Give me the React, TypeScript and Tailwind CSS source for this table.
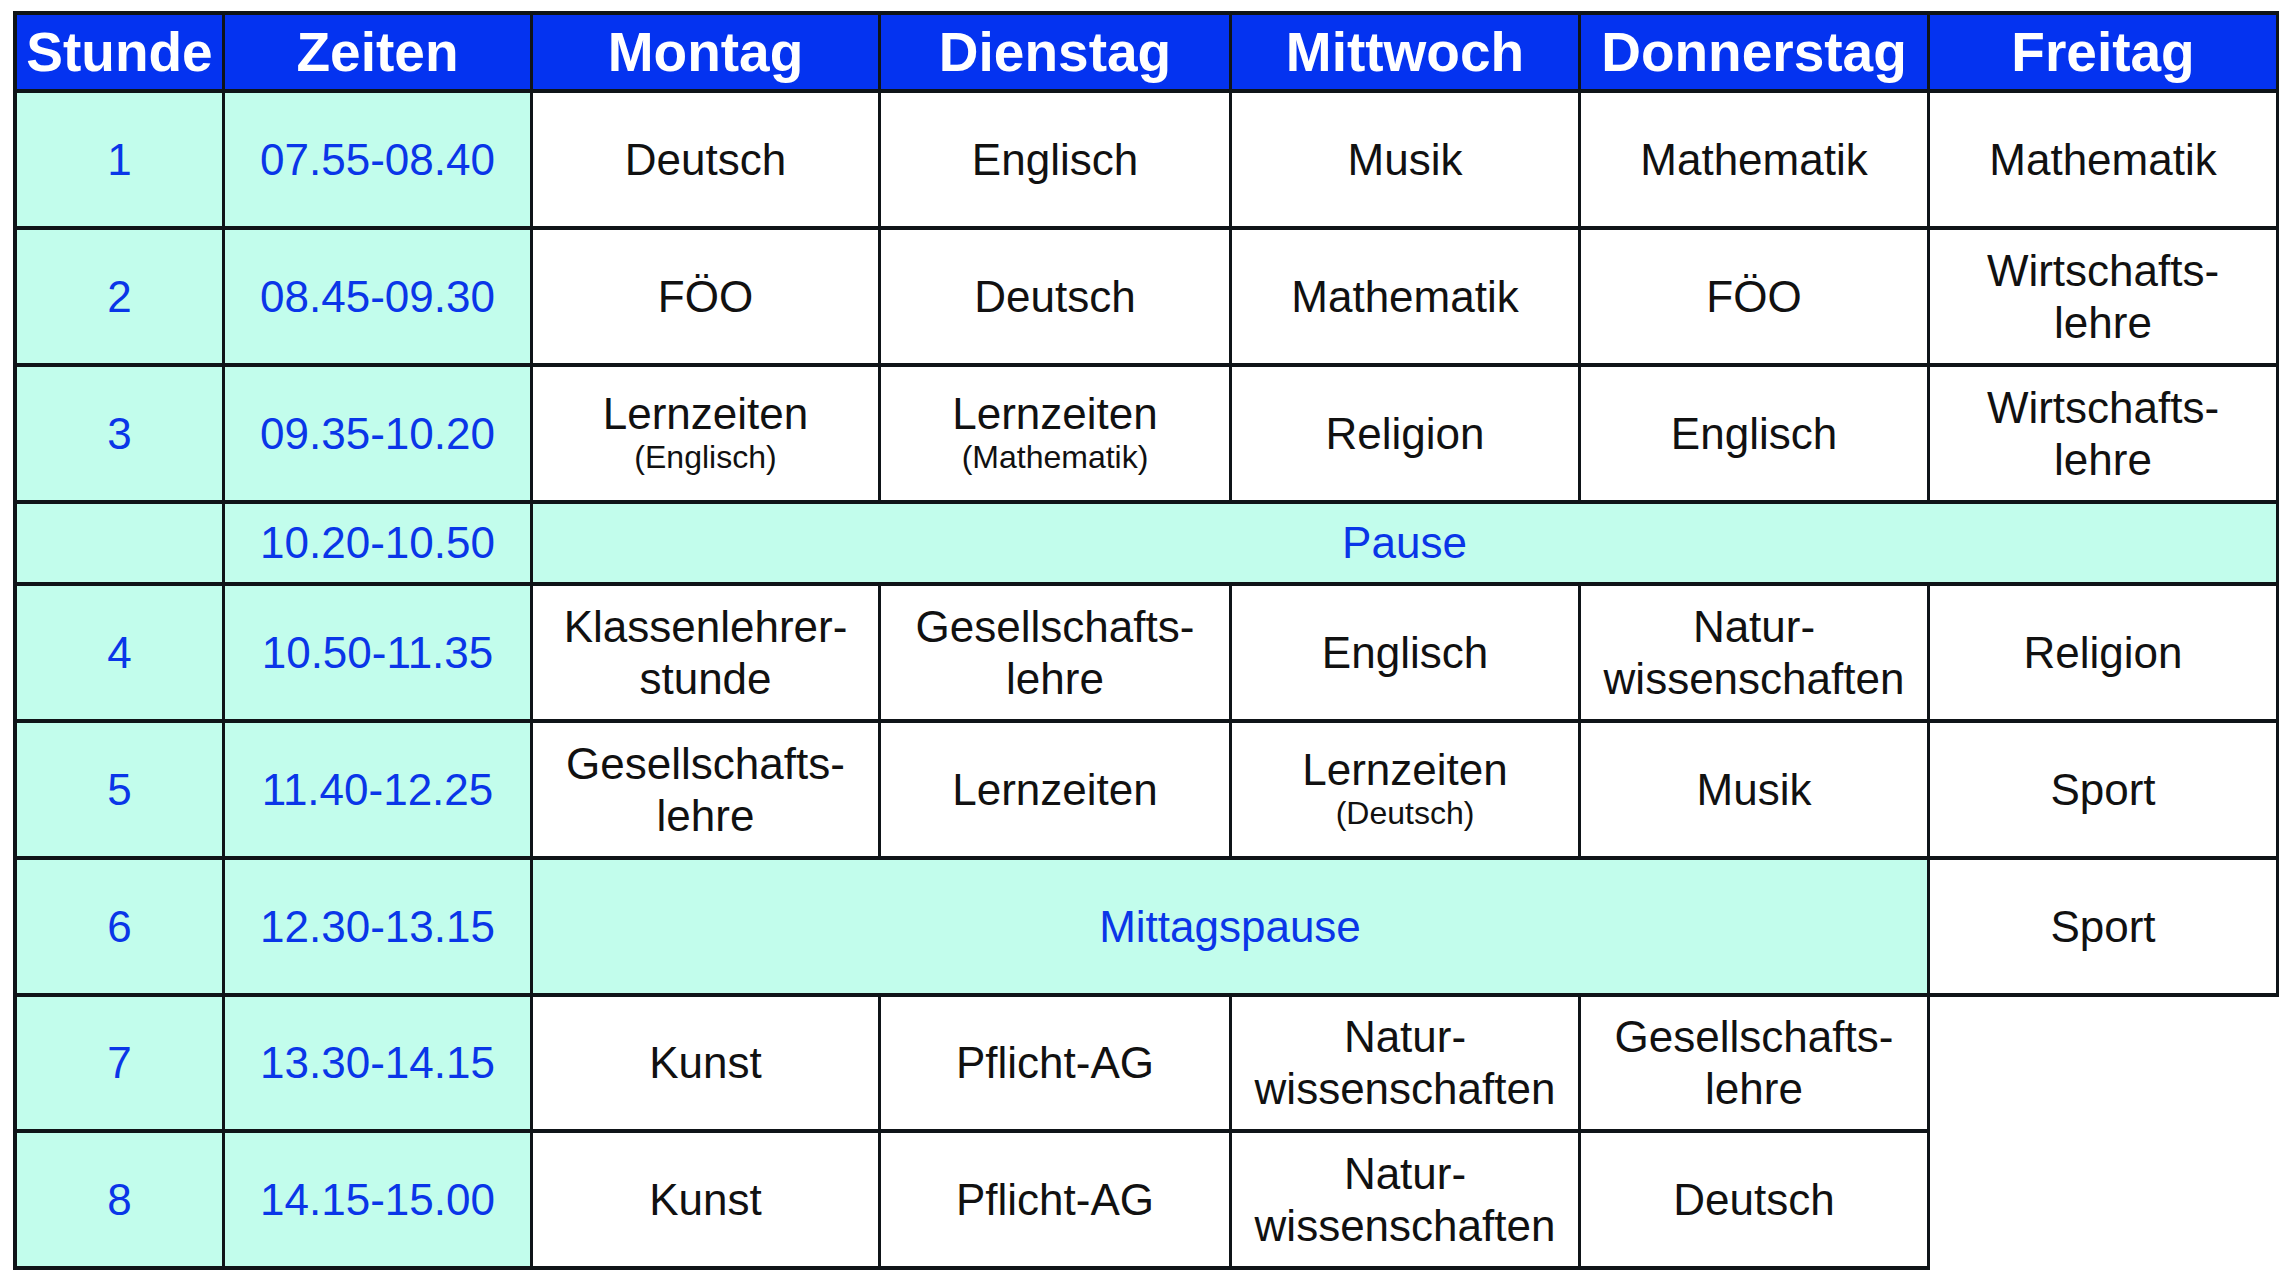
const line = "border-[#0f1418]";

type CellProps = {
  children?: React.ReactNode;
  className?: string;
};

function Head({ children, className = "" }: CellProps) {
  return (
    <div
      className={`flex items-center justify-center border-t-4 border-r-[3px] border-b-4 ${line} bg-[#0433f0] text-[55px] font-bold text-white ${className}`}
    >
      {children}
    </div>
  );
}

function Side({ children, className = "" }: CellProps) {
  return (
    <div
      className={`flex items-center justify-center border-r-[3px] border-b-4 ${line} bg-[#c2fdec] text-[44px] text-[#0a36e8] ${className}`}
    >
      {children}
    </div>
  );
}

function Cell({ children, className = "" }: CellProps) {
  return (
    <div
      className={`flex flex-col items-center justify-center border-r-[3px] border-b-4 ${line} bg-white text-center text-[44px] leading-[52px] text-[#111] ${className}`}
    >
      {children}
    </div>
  );
}

function Lern({ sub }: { sub: string }) {
  return (
    <>
      <span className="leading-[52px]">Lernzeiten</span>
      <span className="mb-[6px] text-[32px] leading-[34px]">({sub})</span>
    </>
  );
}

function Two({ a, b }: { a: string; b: string }) {
  return (
    <>
      <span>{a}</span>
      <span>{b}</span>
    </>
  );
}

const rows: { nr: string; time: string; days: React.ReactNode[] }[] = [
  { nr: "1", time: "07.55-08.40", days: ["Deutsch", "Englisch", "Musik", "Mathematik", "Mathematik"] },
  {
    nr: "2",
    time: "08.45-09.30",
    days: ["FÖO", "Deutsch", "Mathematik", "FÖO", <Two a="Wirtschafts-" b="lehre" />],
  },
  {
    nr: "3",
    time: "09.35-10.20",
    days: [<Lern sub="Englisch" />, <Lern sub="Mathematik" />, "Religion", "Englisch", <Two a="Wirtschafts-" b="lehre" />],
  },
];

const rowsAfterPause: { nr: string; time: string; days: React.ReactNode[] }[] = [
  {
    nr: "4",
    time: "10.50-11.35",
    days: [
      <Two a="Klassenlehrer-" b="stunde" />,
      <Two a="Gesellschafts-" b="lehre" />,
      "Englisch",
      <Two a="Natur-" b="wissenschaften" />,
      "Religion",
    ],
  },
  {
    nr: "5",
    time: "11.40-12.25",
    days: [<Two a="Gesellschafts-" b="lehre" />, "Lernzeiten", <Lern sub="Deutsch" />, "Musik", "Sport"],
  },
];

export default function App() {
  return (
    <div className="h-[1283px] w-[2290px] bg-white pt-[11px] pl-[13px] font-['Liberation_Sans',Arial,sans-serif]">
      <div className="grid grid-cols-[212px_308px_348px_351px_349px_349px_349px] grid-rows-[82px_137px_137px_137px_82px_137px_137px_137px_136px_137px]">
        <Head className="border-l-4">Stunde</Head>
        <Head>Zeiten</Head>
        <Head>Montag</Head>
        <Head>Dienstag</Head>
        <Head>Mittwoch</Head>
        <Head>Donnerstag</Head>
        <Head className="border-r-4">Freitag</Head>

        {rows.map((r) => (
          <Row key={r.nr} {...r} />
        ))}

        <Side className="border-l-4" />
        <Side>10.20-10.50</Side>
        <Side className="col-span-5 border-r-4">Pause</Side>

        {rowsAfterPause.map((r) => (
          <Row key={r.nr} {...r} />
        ))}

        <Side className="border-l-4">6</Side>
        <Side>12.30-13.15</Side>
        <Side className="col-span-4">Mittagspause</Side>
        <Cell className="border-r-4">Sport</Cell>

        <Side className="border-l-4">7</Side>
        <Side>13.30-14.15</Side>
        <Cell>Kunst</Cell>
        <Cell>Pflicht-AG</Cell>
        <Cell>
          <Two a="Natur-" b="wissenschaften" />
        </Cell>
        <Cell className="border-r-4">
          <Two a="Gesellschafts-" b="lehre" />
        </Cell>
        <div className="row-span-2 bg-white" />

        <Side className="border-l-4">8</Side>
        <Side>14.15-15.00</Side>
        <Cell>Kunst</Cell>
        <Cell>Pflicht-AG</Cell>
        <Cell>
          <Two a="Natur-" b="wissenschaften" />
        </Cell>
        <Cell className="border-r-4">Deutsch</Cell>
      </div>
    </div>
  );
}

function Row({ nr, time, days }: { nr: string; time: string; days: React.ReactNode[] }) {
  return (
    <>
      <Side className="border-l-4">{nr}</Side>
      <Side>{time}</Side>
      {days.map((d, i) => (
        <Cell key={i} className={i === 4 ? "border-r-4" : ""}>
          {d}
        </Cell>
      ))}
    </>
  );
}
